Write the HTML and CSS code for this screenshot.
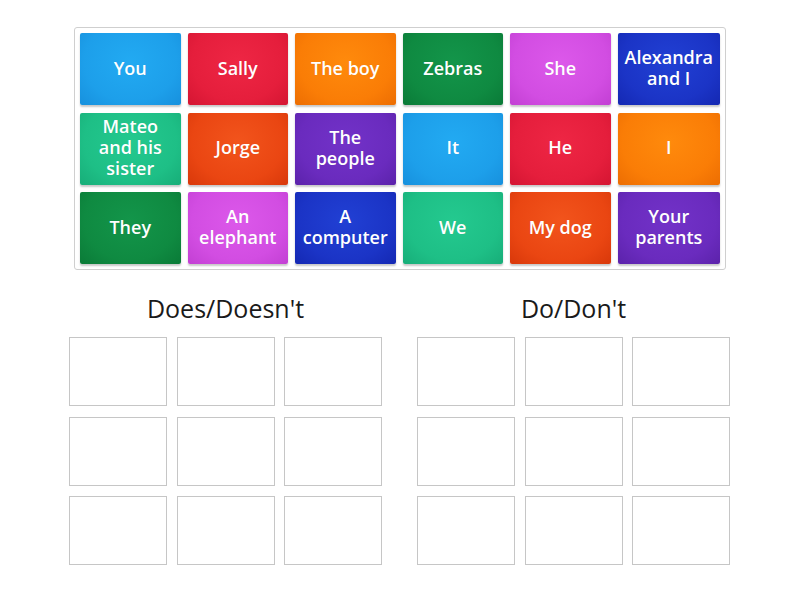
FILE: index.html
```html
<!DOCTYPE html>
<html>
<head>
<meta charset="utf-8">
<link rel="stylesheet" href="styles.css">
</head>
<body>
<div class="bank">
  <div class="tile blue">You</div>
  <div class="tile red">Sally</div>
  <div class="tile orange">The boy</div>
  <div class="tile green">Zebras</div>
  <div class="tile magenta">She</div>
  <div class="tile navy">Alexandra and I</div>
  <div class="tile teal">Mateo and his sister</div>
  <div class="tile vermilion">Jorge</div>
  <div class="tile purple">The people</div>
  <div class="tile blue">It</div>
  <div class="tile red">He</div>
  <div class="tile orange">I</div>
  <div class="tile green">They</div>
  <div class="tile magenta">An elephant</div>
  <div class="tile navy">A computer</div>
  <div class="tile teal">We</div>
  <div class="tile vermilion">My dog</div>
  <div class="tile purple">Your parents</div>
</div>
<div class="groups">
  <div class="group">
    <h2 class="title">Does/Doesn't</h2>
    <div class="slots">
      <div class="slot"></div><div class="slot"></div><div class="slot"></div>
      <div class="slot"></div><div class="slot"></div><div class="slot"></div>
      <div class="slot"></div><div class="slot"></div><div class="slot"></div>
    </div>
  </div>
  <div class="group">
    <h2 class="title">Do/Don't</h2>
    <div class="slots">
      <div class="slot"></div><div class="slot"></div><div class="slot"></div>
      <div class="slot"></div><div class="slot"></div><div class="slot"></div>
      <div class="slot"></div><div class="slot"></div><div class="slot"></div>
    </div>
  </div>
</div>
</body>
</html>
```

FILE: styles.css
```css
html, body {
  margin: 0;
  padding: 0;
  background: #fff;
  font-family: "Open Sans", "Liberation Sans", sans-serif;
}

.bank {
  box-sizing: border-box;
  width: 652px;
  margin: 27px 0 0 74px;
  padding: 5px;
  border: 1px solid #cfcfcf;
  border-radius: 3px;
  display: grid;
  grid-template-columns: repeat(6, 1fr);
  grid-auto-rows: 72px;
  column-gap: 7px;
  row-gap: 7.5px;
}

.tile {
  display: flex;
  align-items: center;
  justify-content: center;
  text-align: center;
  color: #fff;
  font-weight: 600;
  font-size: 18px;
  line-height: 21px;
  border-radius: 2px;
  padding: 0 7px 2px;
  box-shadow: 0 2px 2px rgba(0, 0, 0, 0.22);
  text-shadow: 0 0 1px rgba(0,0,0,0.08);
}

.blue { background: radial-gradient(ellipse at 50% 40%, #22aaf2 0%, #1d9fea 65%, #1790dd 100%); }
.red { background: radial-gradient(ellipse at 50% 40%, #ee2644 0%, #e51e3c 65%, #d41532 100%); }
.orange { background: radial-gradient(ellipse at 50% 40%, #ff8a0c 0%, #fa7d06 65%, #ec6d02 100%); }
.green { background: radial-gradient(ellipse at 50% 40%, #13954a 0%, #0f8a41 65%, #0a7a37 100%); }
.magenta { background: radial-gradient(ellipse at 50% 40%, #dc58ea 0%, #d24de2 65%, #c23fd3 100%); }
.navy { background: radial-gradient(ellipse at 50% 40%, #2140d4 0%, #1b34c6 65%, #1428b2 100%); }
.teal { background: radial-gradient(ellipse at 50% 40%, #24c98f 0%, #1ebf86 65%, #17ad78 100%); }
.vermilion { background: radial-gradient(ellipse at 50% 40%, #f2541c 0%, #ea4612 65%, #d8380a 100%); }
.purple { background: radial-gradient(ellipse at 50% 40%, #7232c8 0%, #6a2bbe 65%, #5b22aa 100%); }

.groups {
  display: flex;
  gap: 35px;
  margin: 22px 0 0 69px;
}

.group {
  width: 313px;
}

.title {
  margin: 0 0 12px 0;
  text-align: center;
  font-weight: 400;
  font-size: 25px;
  line-height: 33px;
  color: #1a1a1a;
}

.slots {
  display: grid;
  grid-template-columns: repeat(3, 98px);
  grid-auto-rows: 69px;
  column-gap: 9.5px;
  row-gap: 10.5px;
}

.slot {
  box-sizing: border-box;
  border: 1px solid #c6c6c6;
  background: #fff;
}
```
